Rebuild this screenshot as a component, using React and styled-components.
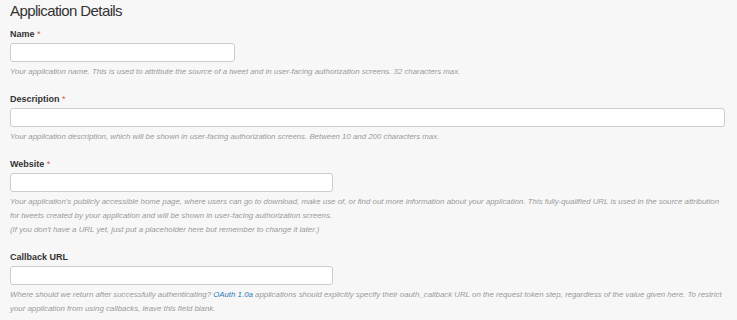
import React from 'react';
import styled, { createGlobalStyle } from 'styled-components';

const GlobalStyle = createGlobalStyle`
    body {
        margin: 0;
        background-color: #f7f7f7;
        font-family: "Liberation Sans", Arial, sans-serif;
    }
`;

function Field({ label, required, width, children }) {
    return (
        <FieldWrap>
            <Label>
                {label}
                {required ? <Star> *</Star> : null}
            </Label>
            <TextInput type='text' $width={width} />
            <Help>{children}</Help>
        </FieldWrap>
    );
}

function App() {
    return (
        <>
            <GlobalStyle />
            <Page>
                <Title>Application Details</Title>
                <Field label='Name' required width={225}>
                    Your application name. This is used to attribute the source of a tweet and in user-facing authorization screens. 32 characters max.
                </Field>
                <Field label='Description' required width={715}>
                    Your application description, which will be shown in user-facing authorization screens. Between 10 and 200 characters max.
                </Field>
                <Field label='Website' required width={323}>
                    Your application's publicly accessible home page, where users can go to download, make use of, or find out more information about your application. This fully-qualified URL is used in the source attribution
                    <br />
                    for tweets created by your application and will be shown in user-facing authorization screens.
                    <br />
                    (If you don't have a URL yet, just put a placeholder here but remember to change it later.)
                </Field>
                <Field label='Callback URL' width={323}>
                    Where should we return after successfully authenticating? <Link href='#'>OAuth 1.0a</Link> applications should explicitly specify their oauth_callback URL on the request token step, regardless of the value given here. To restrict
                    <br />
                    your application from using callbacks, leave this field blank.
                </Field>
            </Page>
        </>
    );
}

export default App;

const Page = styled.div`
    padding: 1px 10px 0;
`;

const Title = styled.h2`
    margin: 0 0 7px;
    font-size: 15px;
    line-height: 20px;
    font-weight: normal;
    letter-spacing: -0.6px;
    color: #333;
`;

const FieldWrap = styled.div`
    margin-bottom: 14px;
`;

const Label = styled.label`
    display: block;
    font-size: 9px;
    line-height: 12px;
    font-weight: bold;
    color: #333;
    margin-bottom: 3px;
`;

const Star = styled.span`
    color: #d9534f;
    font-weight: normal;
`;

const TextInput = styled.input`
    display: block;
    box-sizing: border-box;
    width: ${props => props.$width}px;
    height: 19px;
    margin: 0;
    border: 1px solid #ccc;
    border-radius: 3px;
    background-color: #fff;
`;

const Help = styled.p`
    margin: 3px 0 0;
    font-size: 7.85px;
    line-height: 14px;
    font-style: italic;
    color: #999;
    white-space: nowrap;
`;

const Link = styled.a`
    color: #2b7bb9;
    text-decoration: none;
`;
